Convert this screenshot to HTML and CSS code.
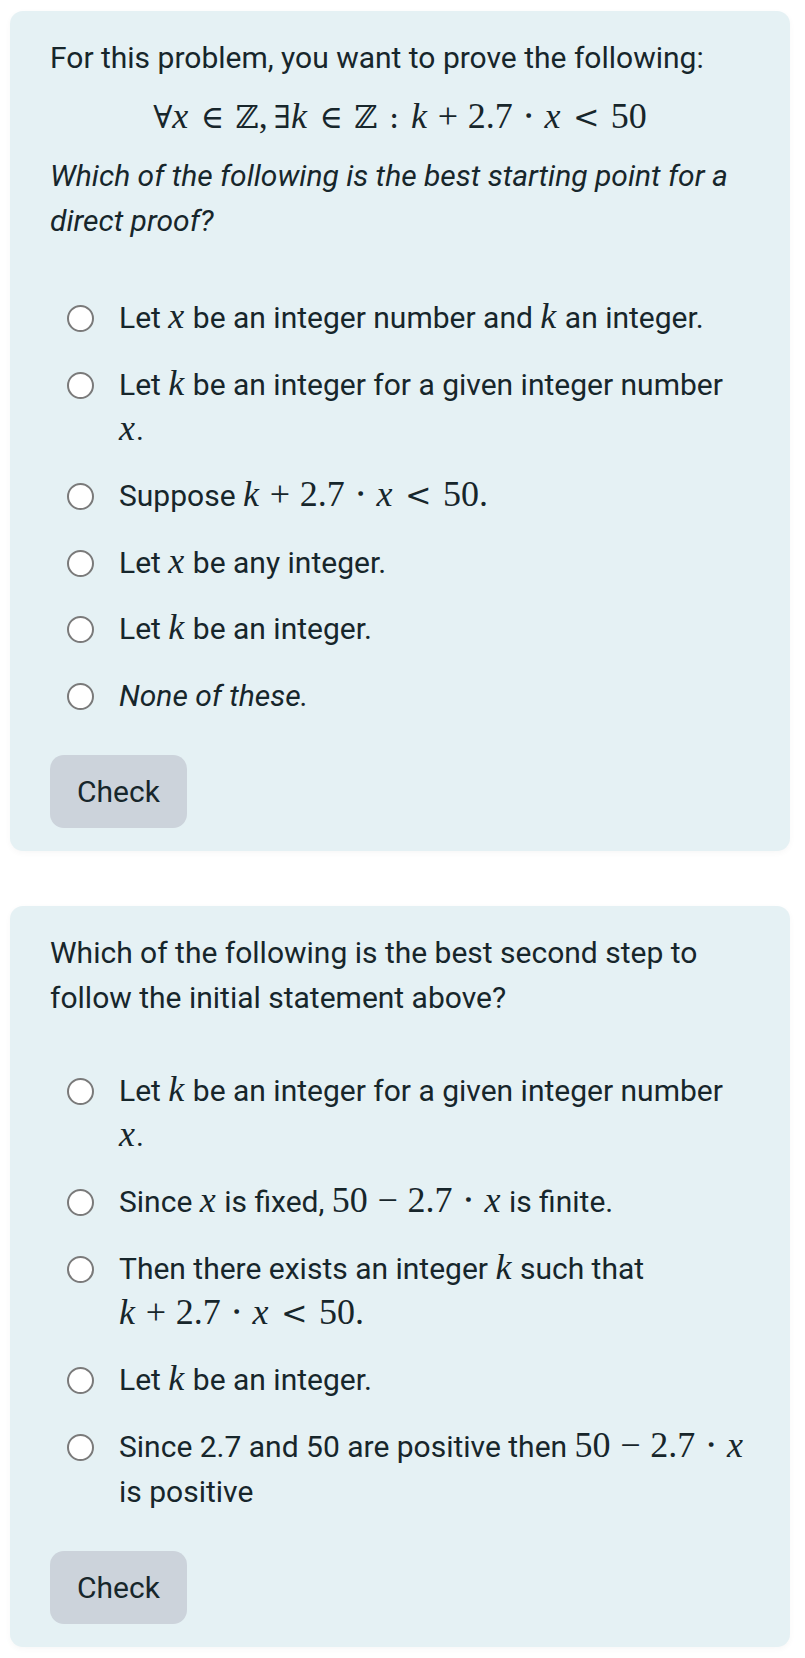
FILE: index.html
```html
<!DOCTYPE html>
<html lang="en">
<head>
<meta charset="utf-8">
<title>Direct proof</title>
<link rel="stylesheet" href="styles.css">
</head>
<body>
<section class="card">
  <p class="text">For this problem, you want to prove the following:</p>
  <div class="display"><span class="m"><span class="sym">∀</span><i>x</i><span class="rel">∈</span><span class="bb">ℤ</span>,<span class="sp"></span><span class="sym">∃</span><i>k</i><span class="rel">∈</span><span class="bb">ℤ</span><span class="rel">:</span><i>k</i><span class="bin">+</span>2.7<span class="bin">⋅</span><i>x</i><span class="rel">&lt;</span>50</span></div>
  <p class="text"><em>Which of the following is the best starting point for a direct proof?</em></p>
  <ul class="options">
    <li class="option"><span class="radio"></span><span class="label">Let <span class="m"><i>x</i></span> be an integer number and <span class="m"><i>k</i></span> an integer.</span></li>
    <li class="option"><span class="radio"></span><span class="label">Let <span class="m"><i>k</i></span> be an integer for a given integer number <span class="m"><i>x</i></span>.</span></li>
    <li class="option"><span class="radio"></span><span class="label">Suppose <span class="m"><i>k</i><span class="bin">+</span>2.7<span class="bin">⋅</span><i>x</i><span class="rel">&lt;</span>50.</span></span></li>
    <li class="option"><span class="radio"></span><span class="label">Let <span class="m"><i>x</i></span> be any integer.</span></li>
    <li class="option"><span class="radio"></span><span class="label">Let <span class="m"><i>k</i></span> be an integer.</span></li>
    <li class="option"><span class="radio"></span><span class="label"><em>None of these.</em></span></li>
  </ul>
  <button class="check" type="button">Check</button>
</section>

<section class="card">
  <p class="text">Which of the following is the best second step to follow the initial statement above?</p>
  <ul class="options options-2">
    <li class="option"><span class="radio"></span><span class="label">Let <span class="m"><i>k</i></span> be an integer for a given integer number <span class="m"><i>x</i></span>.</span></li>
    <li class="option"><span class="radio"></span><span class="label">Since <span class="m"><i>x</i></span> is fixed, <span class="m">50<span class="bin">−</span>2.7<span class="bin">⋅</span><i>x</i></span> is finite.</span></li>
    <li class="option"><span class="radio"></span><span class="label">Then there exists an integer <span class="m"><i>k</i></span> such that <span class="m"><i>k</i><span class="bin">+</span>2.7<span class="bin">⋅</span><i>x</i><span class="rel">&lt;</span>50.</span></span></li>
    <li class="option"><span class="radio"></span><span class="label">Let <span class="m"><i>k</i></span> be an integer.</span></li>
    <li class="option"><span class="radio"></span><span class="label">Since 2.7 and 50 are positive then <span class="m">50<span class="bin">−</span>2.7<span class="bin">⋅</span><i>x</i></span> is positive</span></li>
  </ul>
  <button class="check" type="button">Check</button>
</section>
</body>
</html>
```

FILE: styles.css
```css
html, body {
  margin: 0;
  padding: 0;
  background: #ffffff;
}

body {
  padding: 11px 15px 13px 10px;
  font-family: Roboto, "Liberation Sans", Arial, sans-serif;
  font-size: 30px;
  line-height: 45px;
  color: #17262b;
}

.card {
  background: #e5f1f4;
  border-radius: 13px;
  padding: 24px 40px 23px;
  margin-bottom: 55px;
  box-shadow: 0 2px 6px rgba(0, 0, 0, 0.035);
}

.card:last-child {
  margin-bottom: 0;
}

.text {
  margin: 0;
}

.display {
  margin: 15px 0 13px;
  height: 45px;
  text-align: center;
}

.m {
  font-family: "Liberation Serif", "DejaVu Serif", serif;
  font-size: 36px;
  line-height: 1;
  white-space: nowrap;
}

.m i {
  font-style: italic;
  margin-right: 0.03em;
}

.bb,
.sym {
  font-family: "DejaVu Serif", serif;
  font-size: 0.88em;
}

.rel {
  font-family: "DejaVu Serif", "Liberation Serif", serif;
  font-size: 0.88em;
  margin: 0 0.36em;
}

.bin {
  margin: 0 0.27em;
}

.sp {
  display: inline-block;
  width: 0.17em;
}

.options {
  list-style: none;
  margin: 52px 0 0;
  padding: 0;
}

.options-2 {
  margin-top: 48px;
}

.option {
  display: flex;
  align-items: flex-start;
  margin-bottom: 21.5px;
}

.option:last-child {
  margin-bottom: 0;
}

.radio {
  flex: none;
  box-sizing: border-box;
  width: 27px;
  height: 27px;
  margin: 10px 25px 0 17px;
  border: 2.5px solid #7a7a7a;
  border-radius: 50%;
  background: #ffffff;
}

.label {
  flex: 1;
  min-width: 0;
}

.check {
  display: block;
  margin-top: 37px;
  height: 73px;
  padding: 0 27px;
  border: none;
  border-radius: 14px;
  background: #ccd3db;
  color: #17262b;
  font-family: Roboto, "Liberation Sans", Arial, sans-serif;
  font-size: 30px;
  line-height: 45px;
}
```
